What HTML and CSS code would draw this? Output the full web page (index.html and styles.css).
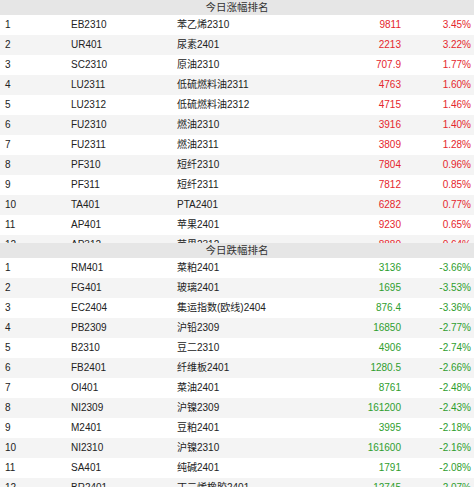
FILE: index.html
```html
<!DOCTYPE html>
<html lang="zh">
<head>
<meta charset="utf-8">
<link rel="stylesheet" href="styles.css">
</head>
<body>
<section class="panel panel-up">
  <div class="panel-title">今日涨幅排名</div>
  <div class="rows up">
    <div class="row"><span>1</span><span>EB2310</span><span>苯乙烯2310</span><span class="num">9811</span><span class="num">3.45%</span></div>
    <div class="row"><span>2</span><span>UR401</span><span>尿素2401</span><span class="num">2213</span><span class="num">3.22%</span></div>
    <div class="row"><span>3</span><span>SC2310</span><span>原油2310</span><span class="num">707.9</span><span class="num">1.77%</span></div>
    <div class="row"><span>4</span><span>LU2311</span><span>低硫燃料油2311</span><span class="num">4763</span><span class="num">1.60%</span></div>
    <div class="row"><span>5</span><span>LU2312</span><span>低硫燃料油2312</span><span class="num">4715</span><span class="num">1.46%</span></div>
    <div class="row"><span>6</span><span>FU2310</span><span>燃油2310</span><span class="num">3916</span><span class="num">1.40%</span></div>
    <div class="row"><span>7</span><span>FU2311</span><span>燃油2311</span><span class="num">3809</span><span class="num">1.28%</span></div>
    <div class="row"><span>8</span><span>PF310</span><span>短纤2310</span><span class="num">7804</span><span class="num">0.96%</span></div>
    <div class="row"><span>9</span><span>PF311</span><span>短纤2311</span><span class="num">7812</span><span class="num">0.85%</span></div>
    <div class="row"><span>10</span><span>TA401</span><span>PTA2401</span><span class="num">6282</span><span class="num">0.77%</span></div>
    <div class="row"><span>11</span><span>AP401</span><span>苹果2401</span><span class="num">9230</span><span class="num">0.65%</span></div>
    <div class="row"><span>12</span><span>AP312</span><span>苹果2312</span><span class="num">8880</span><span class="num">0.64%</span></div>
  </div>
</section>
<section class="panel panel-down">
  <div class="panel-title">今日跌幅排名</div>
  <div class="rows down">
    <div class="row"><span>1</span><span>RM401</span><span>菜粕2401</span><span class="num">3136</span><span class="num">-3.66%</span></div>
    <div class="row"><span>2</span><span>FG401</span><span>玻璃2401</span><span class="num">1695</span><span class="num">-3.53%</span></div>
    <div class="row"><span>3</span><span>EC2404</span><span>集运指数(欧线)2404</span><span class="num">876.4</span><span class="num">-3.36%</span></div>
    <div class="row"><span>4</span><span>PB2309</span><span>沪铅2309</span><span class="num">16850</span><span class="num">-2.77%</span></div>
    <div class="row"><span>5</span><span>B2310</span><span>豆二2310</span><span class="num">4906</span><span class="num">-2.74%</span></div>
    <div class="row"><span>6</span><span>FB2401</span><span>纤维板2401</span><span class="num">1280.5</span><span class="num">-2.66%</span></div>
    <div class="row"><span>7</span><span>OI401</span><span>菜油2401</span><span class="num">8761</span><span class="num">-2.48%</span></div>
    <div class="row"><span>8</span><span>NI2309</span><span>沪镍2309</span><span class="num">161200</span><span class="num">-2.43%</span></div>
    <div class="row"><span>9</span><span>M2401</span><span>豆粕2401</span><span class="num">3995</span><span class="num">-2.18%</span></div>
    <div class="row"><span>10</span><span>NI2310</span><span>沪镍2310</span><span class="num">161600</span><span class="num">-2.16%</span></div>
    <div class="row"><span>11</span><span>SA401</span><span>纯碱2401</span><span class="num">1791</span><span class="num">-2.08%</span></div>
    <div class="row"><span>12</span><span>BR2401</span><span>丁二烯橡胶2401</span><span class="num">12745</span><span class="num">-2.07%</span></div>
  </div>
</section>
</body>
</html>
```

FILE: styles.css
```css
html, body {
  margin: 0;
  padding: 0;
  background: #ffffff;
}
body {
  font-family: "Liberation Sans", Arial, "Noto Sans CJK SC", sans-serif;
  font-size: 10px;
  color: #222222;
  width: 474px;
  height: 487px;
  overflow: hidden;
}
.panel {
  overflow: hidden;
}
.panel-up {
  height: 243px;
}
.panel-down {
  height: 244px;
}
.panel-title {
  height: 15px;
  line-height: 15px;
  background: #e6e6e6;
  text-align: center;
  color: #333333;
  font-size: 10.5px;
}
.row {
  display: grid;
  grid-template-columns: 71px 106px 154px 70px 70px;
  padding-right: 3px;
  height: 20px;
  line-height: 20px;
  white-space: nowrap;
}
.row > span:first-child {
  padding-left: 5px;
}
.row:nth-child(even) {
  background: #f4f4f4;
}
.num {
  text-align: right;
}
.up .num {
  color: #e5262d;
}
.down .num {
  color: #2e9e2e;
}
```
